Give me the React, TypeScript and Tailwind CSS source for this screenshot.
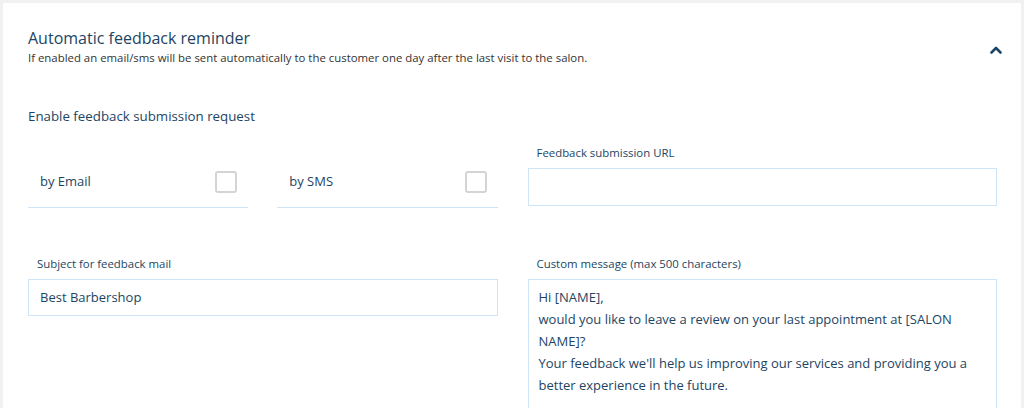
const MESSAGE = `Hi [NAME],
would you like to leave a review on your last appointment at [SALON NAME]?
Your feedback we'll help us improving our services and providing you a better experience in the future.`;

function CheckRow({ label }: { label: string }) {
  return (
    <label className="flex h-[52px] items-center justify-between border-b border-[#cfe4f7] pl-[12px] pr-[11px]">
      <span className="text-[13px] text-[#1d4563]">{label}</span>
      <span className="h-[22px] w-[22px] rounded-[3px] border-2 border-[#d4d4d4] bg-white" />
    </label>
  );
}

export default function App() {
  return (
    <div className="min-h-[408px] bg-[#f1f1f1] pl-[3px] pt-[3px] pr-[3px] font-['Open_Sans',sans-serif]">
      <section className="h-[405px] overflow-hidden bg-white pl-[25px] pr-[24px] pt-[24px]">
        <header className="flex items-start justify-between">
          <div>
            <h2 className="text-[16px] leading-[22px] text-[#1d4563]">
              Automatic feedback reminder
            </h2>
            <p className="mt-[2px] text-[11.4px] leading-[14px] text-[#333]">
              If enabled an email/sms will be sent automatically to the customer one day after the last visit to the salon.
            </p>
          </div>
          <svg
            className="mt-[18px] -mr-[6px]"
            width="14"
            height="10"
            viewBox="0 0 14 10"
            fill="none"
            stroke="#1d4563"
            strokeWidth="2.6"
            strokeLinecap="round"
            strokeLinejoin="round"
          >
            <path d="M2.5 7.5 L7 3 L11.5 7.5" />
          </svg>
        </header>

        <p className="mt-[42px] text-[13.3px] leading-[18px] text-[#1d4563]">
          Enable feedback submission request
        </p>

        <div className="mt-[21px] grid grid-cols-2 gap-x-[30px]">
          <div className="grid grid-cols-2 gap-x-[29px] pt-[10px]">
            <CheckRow label="by Email" />
            <CheckRow label="by SMS" />
          </div>
          <div>
            <p className="pl-[9px] text-[11.4px] leading-[14px] text-[#1d4563]">
              Feedback submission URL
            </p>
            <div className="mt-[8px] h-[38px] border border-[#cfe4f7] bg-white" />
          </div>

          <div className="mt-[49px]">
            <p className="pl-[9px] text-[11.4px] leading-[14px] text-[#1d4563]">
              Subject for feedback mail
            </p>
            <div className="mt-[8px] flex h-[37px] items-center border border-[#cfe4f7] bg-white px-[11px] text-[13px] text-[#1d4563]">
              Best Barbershop
            </div>
          </div>
          <div className="mt-[49px]">
            <p className="pl-[9px] text-[11.4px] leading-[14px] text-[#1d4563]">
              Custom message (max 500 characters)
            </p>
            <div className="mt-[8px] h-[140px] whitespace-pre-line border border-[#cfe4f7] bg-white px-[10px] pt-[6px] pr-[14px] text-[13px] leading-[22px] text-[#1d4563]">
              {MESSAGE}
            </div>
          </div>
        </div>
      </section>
    </div>
  );
}
